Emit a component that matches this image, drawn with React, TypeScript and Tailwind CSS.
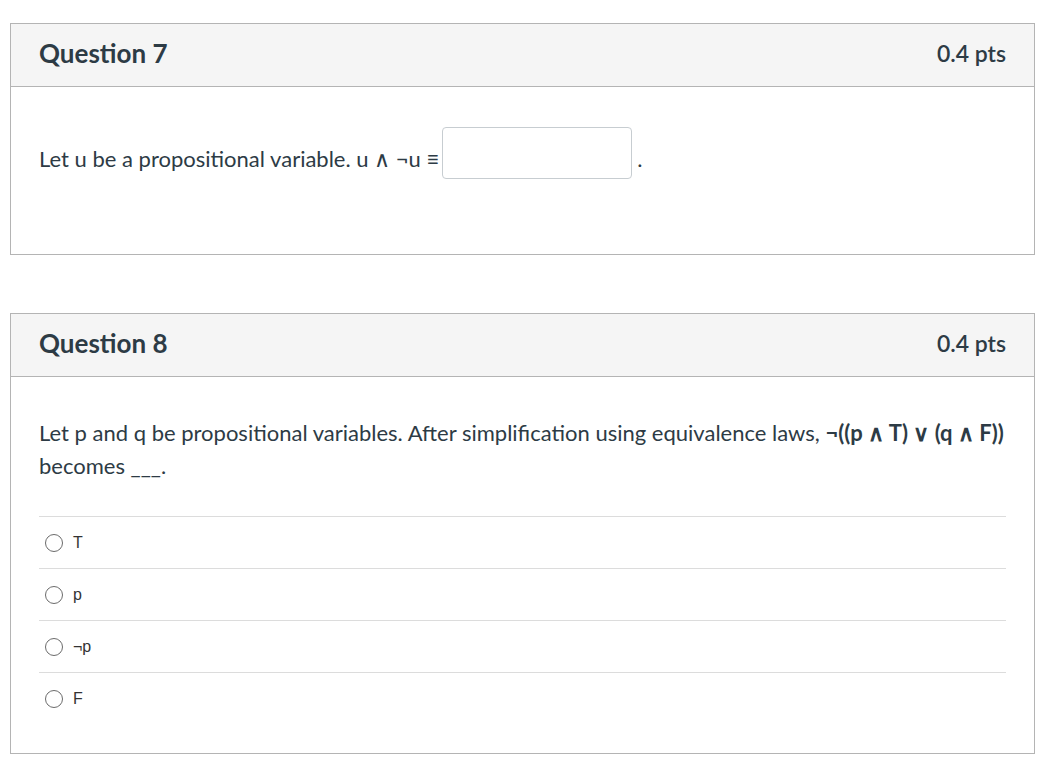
const options = ['T', 'p', '¬p', 'F']

function Header({ title, pts }: { title: string; pts: string }) {
  return (
    <div className="flex h-[63px] items-center justify-between border-b border-[#b4b4b4] bg-[#f5f5f5] px-[28px] pb-[4px]">
      <h2 className="text-[26px] font-bold text-[#2d3b45]">{title}</h2>
      <span className="text-[23px] font-semibold text-[#2d3b45]">{pts}</span>
    </div>
  )
}

export default function App() {
  return (
    <div className="min-h-screen bg-white pt-[23px] font-['Lato',sans-serif] text-[#2d3b45]">
      {/* Question 7 */}
      <div className="ml-[10px] w-[1025px] border border-[#b4b4b4]">
        <Header title="Question 7" pts="0.4 pts" />
        <div className="flex h-[167px] items-start px-[28px] pt-[40px]">
          <div className="flex items-center text-[22px]">
            <span className="mt-[11px]">Let u be a propositional variable. u ∧ ¬u ≡</span>
            <input
              type="text"
              className="ml-[3px] h-[52px] w-[190px] rounded-[4px] border border-[#c7cdd1] bg-white outline-none"
            />
            <span className="ml-[5px] mt-[11px]">.</span>
          </div>
        </div>
      </div>

      {/* Question 8 */}
      <div className="ml-[10px] mt-[58px] w-[1025px] border border-[#b4b4b4]">
        <Header title="Question 8" pts="0.4 pts" />
        <div className="px-[28px] pb-[29px] pt-[39px]">
          <p className="text-[22px] leading-[33px]">
            Let p and q be propositional variables. After simplification using equivalence laws,{' '}
            <strong className="font-bold">¬((p ∧ T) ∨ (q ∧ F))</strong> becomes ___.
          </p>
          <div className="mt-[34px]">
            {options.map((o) => (
              <label
                key={o}
                className="flex h-[52px] items-center border-t border-[#dcdcdc] pl-[6px] font-['Liberation_Sans',Arial,sans-serif] text-[16px] text-[#333]"
              >
                <span className="h-[18px] w-[18px] rounded-full border border-[#6b6b6b]" />
                <span className="ml-[10px]">{o}</span>
              </label>
            ))}
          </div>
        </div>
      </div>
    </div>
  )
}
